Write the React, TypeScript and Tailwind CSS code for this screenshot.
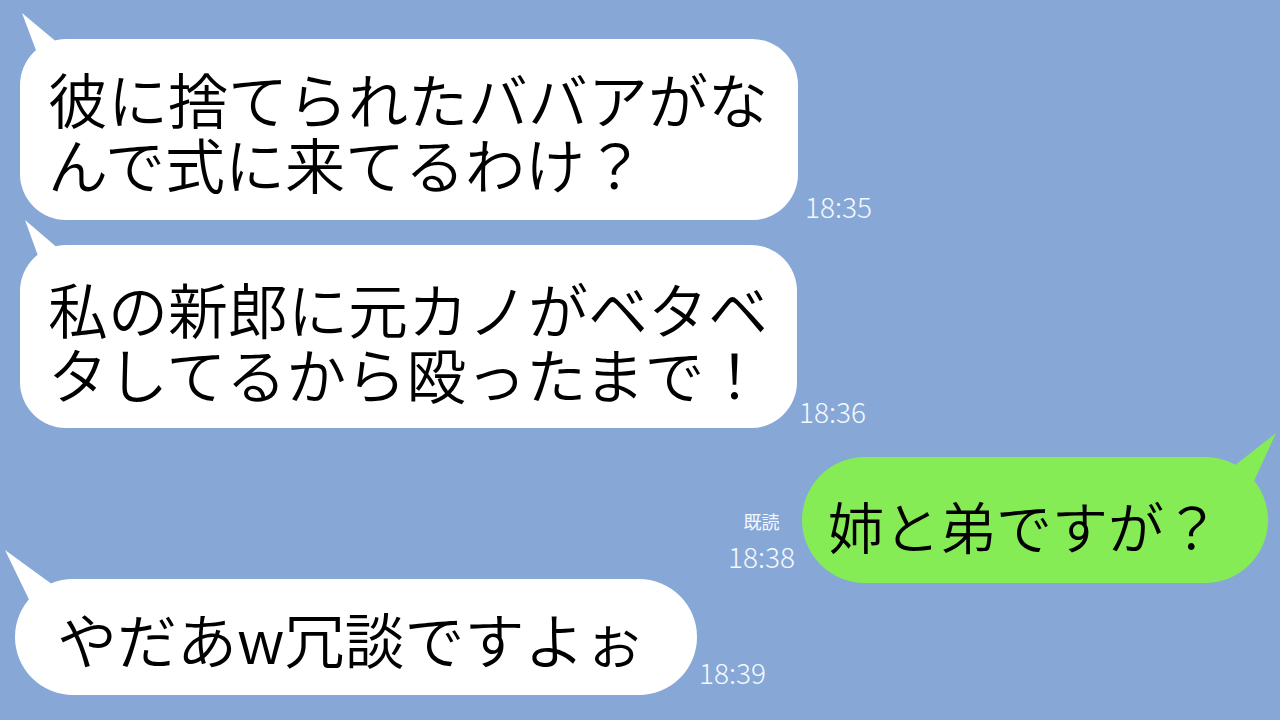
import type { ReactNode } from 'react'

type TailProps = { points: string; className: string; fill: string }

function Tail({ points, className, fill }: TailProps) {
  return (
    <svg className={`absolute ${className}`} width="70" height="70" viewBox="0 0 70 70" aria-hidden>
      <polygon points={points} fill={fill} />
    </svg>
  )
}

function Time({ children, className = '' }: { children: ReactNode; className?: string }) {
  return (
    <span className={`text-[28px] leading-none font-light text-[#f4f8ff] ${className}`}>{children}</span>
  )
}

export default function App() {
  return (
    <div className="h-[720px] w-[1280px] overflow-hidden bg-[#87a8d6] pt-[39px] font-['Noto_Sans_CJK_JP','Noto_Sans',sans-serif] text-black">
      {/* 1 */}
      <div className="flex items-end pl-[20px]">
        <div className="relative flex h-[181px] w-[778px] items-center rounded-[46px] bg-white pl-[28px]">
          <Tail className="left-0 top-[-30px]" points="2,4 45,40 23,60" fill="#ffffff" />
          <div className="relative whitespace-nowrap text-[60px] font-[350] leading-[65px]">
            彼に捨てられたババアがな
            <br />
            んで式に来てるわけ？
          </div>
        </div>
        <Time className="mb-[0px] ml-[7px]">18:35</Time>
      </div>

      {/* 2 */}
      <div className="mt-[25px] flex items-end pl-[20px]">
        <div className="relative flex h-[183px] w-[777px] items-center rounded-[46px] bg-white pl-[28px]">
          <Tail className="left-0 top-[-30px]" points="5,5 47,41 25,60" fill="#ffffff" />
          <div className="relative whitespace-nowrap pt-[6px] text-[60px] font-[350] leading-[65px]">
            私の新郎に元カノがベタベ
            <br />
            タしてるから殴ったまで！
          </div>
        </div>
        <Time className="mb-[3px] ml-[2px]">18:36</Time>
      </div>

      {/* 3 */}
      <div className="mt-[29px] flex items-end justify-end pr-[12px]">
        <div className="mb-[13px] mr-[7px] flex flex-col items-center">
          <span className="text-[18px] leading-none text-[#f4f8ff]">既読</span>
          <Time className="mt-[12px]">18:38</Time>
        </div>
        <div className="relative flex h-[126px] w-[466px] items-center rounded-full bg-[#86ec55] pl-[26px]">
          <Tail className="right-[-8px] top-[-30px]" points="70,6 14,50 43,65" fill="#86ec55" />
          <div className="relative whitespace-nowrap pt-[8px] text-[56px] font-[350] leading-[65px]">姉と弟ですが？</div>
        </div>
      </div>

      {/* 4 */}
      <div className="mt-[-4px] flex items-end pl-[15px]">
        <div className="relative flex h-[116px] w-[682px] items-center rounded-[58px] bg-white pl-[42px]">
          <Tail className="left-[-12px] top-[-30px]" points="2,1 61,44 33,65" fill="#ffffff" />
          <div className="relative whitespace-nowrap text-[60px] font-[350] leading-[65px]">やだあw冗談ですよぉ</div>
        </div>
        <Time className="mb-[9px] ml-[2px]">18:39</Time>
      </div>
    </div>
  )
}
